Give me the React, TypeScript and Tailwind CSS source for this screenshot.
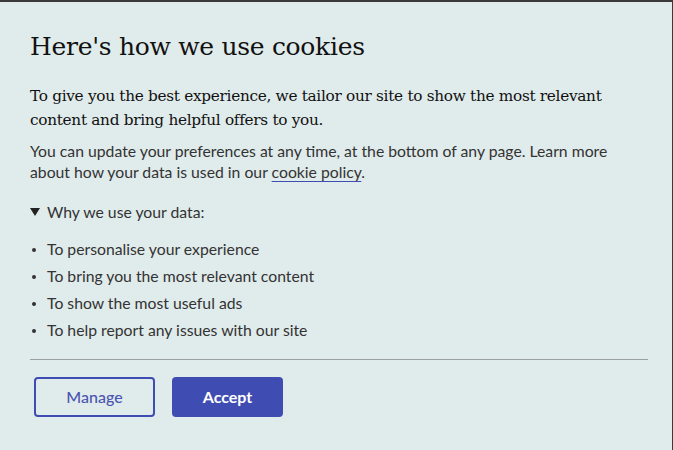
import React from "react";

const reasons = [
  "To personalise your experience",
  "To bring you the most relevant content",
  "To show the most useful ads",
  "To help report any issues with our site",
];

const App = () => {
  return (
    <div className="h-[450px] w-[673px] overflow-hidden bg-[#3a3a3a] pt-[2px] pr-[1px]">
      <div className="h-full bg-[#e0ebeb] pl-[30px] pr-[24px] pt-[29px] font-['Lato',sans-serif] text-[#333]">
        <h2 className="font-['DejaVu_Serif',serif] text-[25px] leading-[32px] tracking-[-0.3px] text-[#111]">
          Here's how we use cookies
        </h2>
        <p className="mt-[21px] max-w-[605px] font-['DejaVu_Serif',serif] text-[15.3px] leading-[24px] tracking-[-0.3px] text-[#111]">
          To give you the best experience, we tailor our site to show the most relevant content and bring helpful offers to you.
        </p>
        <p className="mt-[8px] max-w-[600px] text-[15.75px] leading-[21px]">
          You can update your preferences at any time, at the bottom of any page. Learn more about how your data is used in our{" "}
          <a href="#" className="underline decoration-[#3f4db3] underline-offset-[3px]">cookie policy</a>.
        </p>
        <details open className="mt-[19px]">
          <summary className="flex list-none items-center text-[15.75px] leading-[21px]">
            <span className="mr-[7px] h-0 w-0 border-l-[5.5px] border-r-[5.5px] border-t-[8px] border-l-transparent border-r-transparent border-t-[#222]" />
            Why we use your data:
          </summary>
          <ul className="mt-[13px]">
            {reasons.map((r, i) => (
              <li key={i} className="flex items-center text-[15.75px] leading-[27px]">
                <span className="ml-[2px] mr-[11px] h-[4px] w-[4px] translate-y-[1px] rounded-full bg-[#333]" />
                {r}
              </li>
            ))}
          </ul>
        </details>
        <hr className="mt-[16px] border-t border-[#9a9fa0]" />
        <div className="mt-[17px] flex gap-[17px] pl-[4px]">
          <button className="h-[40px] w-[121px] rounded-[4px] border-2 border-[#3f4db3] text-[16px] font-medium text-[#4a55b0]">
            Manage
          </button>
          <button className="h-[40px] w-[111px] rounded-[4px] bg-[#3f4db3] text-[16px] font-bold text-white">
            Accept
          </button>
        </div>
      </div>
    </div>
  );
};

export default App;
